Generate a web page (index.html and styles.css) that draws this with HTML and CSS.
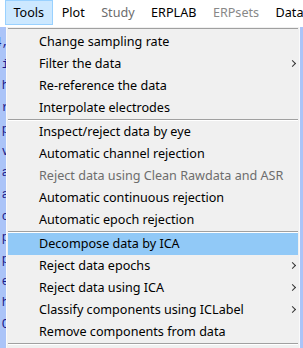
FILE: index.html
```html
<!DOCTYPE html>
<html lang="en">
<head>
  <meta charset="UTF-8">
  <title>Tools menu</title>
  <link rel="stylesheet" href="styles.css">
</head>
<body>
  <div class="menubar">
    <span class="top open">Tools</span>
    <span class="top">Plot</span>
    <span class="top off">Study</span>
    <span class="top">ERPLAB</span>
    <span class="top off2">ERPsets</span>
    <span class="top">Datasets</span>
  </div>

  <div class="below">
    <div class="side left">
      <span>4,</span><span>i</span><span>h</span><span>r</span><span>p</span><span>v</span><span>a</span><span>a</span><span>c</span><span>p</span><span>p</span><span>e</span><span>h</span><span>C</span>
    </div>

    <div class="menu">
      <div class="item">Change sampling rate</div>
      <div class="item sub">Filter the data</div>
      <div class="item">Re-reference the data</div>
      <div class="item">Interpolate electrodes</div>
      <div class="sep"></div>
      <div class="item">Inspect/reject data by eye</div>
      <div class="item">Automatic channel rejection</div>
      <div class="item dim">Reject data using Clean Rawdata and ASR</div>
      <div class="item">Automatic continuous rejection</div>
      <div class="item">Automatic epoch rejection</div>
      <div class="sep"></div>
      <div class="item hot">Decompose data by ICA</div>
      <div class="item sub">Reject data epochs</div>
      <div class="item sub">Reject data using ICA</div>
      <div class="item sub">Classify components using ICLabel</div>
      <div class="item">Remove components from data</div>
      <div class="sep"></div>
    </div>

    <div class="side right"></div>
  </div>
</body>
</html>
```

FILE: styles.css
```css
body {
  margin: 0;
  width: 303px;
  height: 348px;
  overflow: hidden;
  background: #fff;
  font-family: "Noto Sans", "DejaVu Sans", sans-serif;
  font-size: 12.6px;
  color: #000;
}
.menubar {
  display: flex;
  height: 27px;
  padding-left: 5px;
  background: #fff;
  overflow: hidden;
}
.top {
  height: 25px;
  line-height: 24px;
  padding: 0 7px 0 7.5px;
  border: 1px solid transparent;
  box-sizing: border-box;
  white-space: nowrap;
  flex-shrink: 0;
}
.top.open {
  padding-right: 8px;
  background: #cce8ff;
  border-color: #99d1ff;
}
.top.off {
  color: #6d6d6d;
}
.top.off2 {
  color: #888;
}
.below {
  display: flex;
  height: 321px;
}
.side {
  width: 6px;
  background: #abc4f8;
  overflow: hidden;
}
.side.left {
  display: flex;
  flex-direction: column;
  align-items: flex-end;
  padding-top: 6px;
  font-family: "Liberation Mono", monospace;
  font-size: 12px;
  color: #1a1a8a;
  line-height: 21.7px;
}
.side.left span {
  margin-right: -3px;
}
.side.right {
  width: 3px;
}
.menu {
  flex: 1;
  background: #f0f0f0;
  border-left: 1px solid #fafafa;
  border-right: 1px solid #fafafa;
  padding: 1px 1px 0 1px;
  display: flex;
  flex-direction: column;
}
.menu::before {
  content: "";
  height: 1px;
  margin-bottom: 2px;
  background: #a0a0a0;
}
.item {
  position: relative;
  flex-shrink: 0;
  height: 22px;
  line-height: 22px;
  padding-left: 31px;
  white-space: nowrap;
}
.item.sub::after {
  content: "";
  position: absolute;
  right: 3px;
  top: 8px;
  width: 4px;
  height: 4px;
  border-top: 1px solid #333;
  border-right: 1px solid #333;
  transform: rotate(45deg);
}
.item.dim {
  color: #6d6d6d;
}
.item.hot {
  background: #91c9f7;
}
.sep {
  flex-shrink: 0;
  height: 1px;
  background: #a0a0a0;
  border-bottom: 1px solid #fff;
}
```
